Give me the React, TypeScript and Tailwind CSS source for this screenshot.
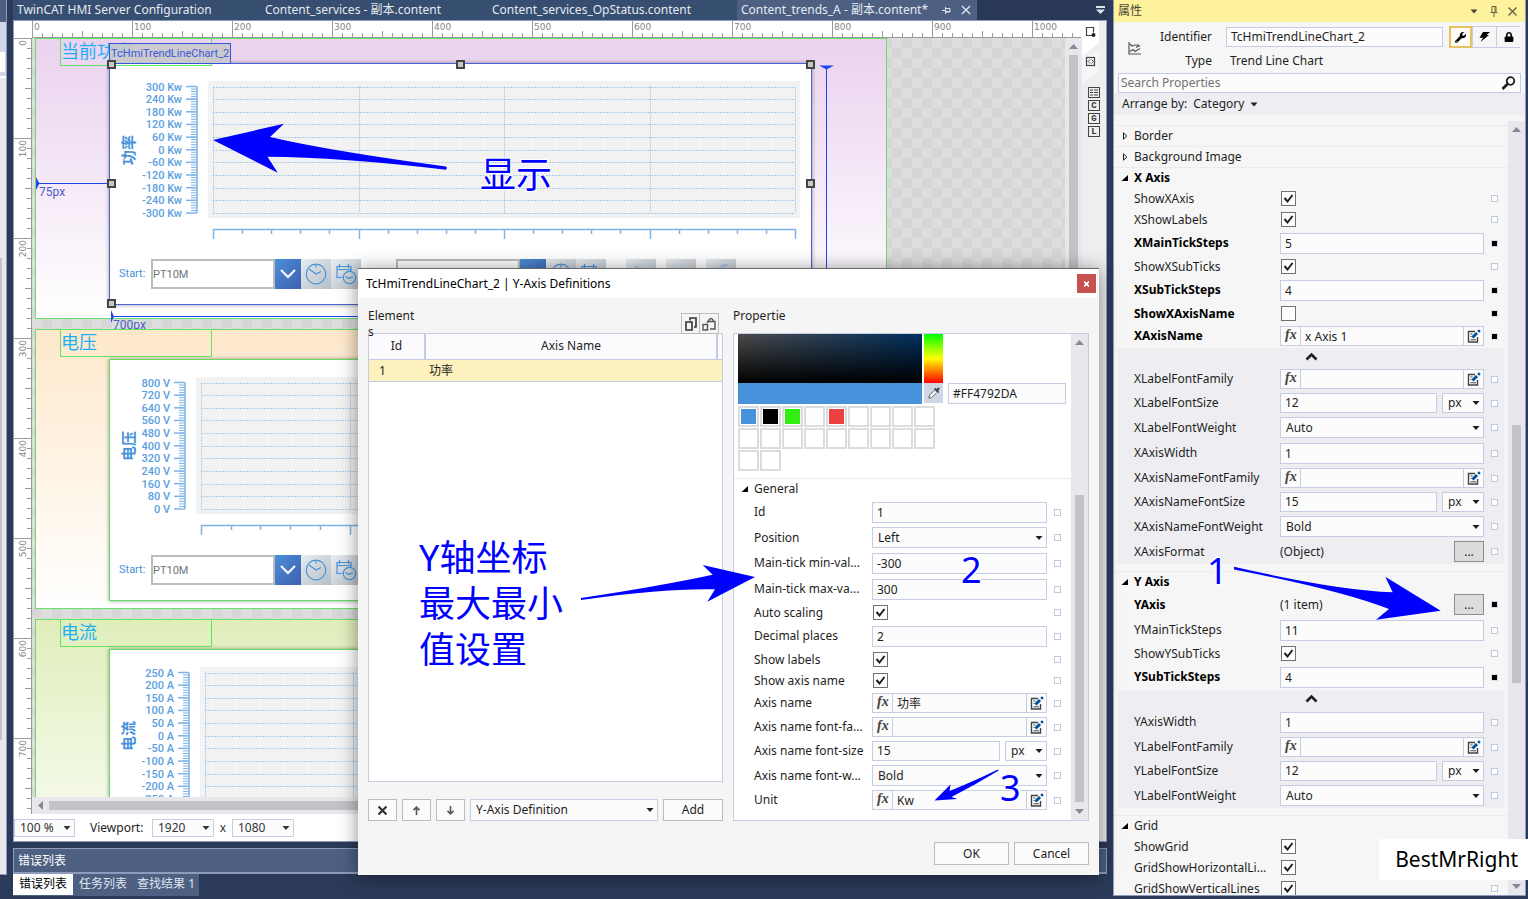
import { useId } from 'react'
import type { ReactNode } from 'react'
import { FaLock, FaWrench } from 'react-icons/fa'

type Kind = 'check' | 'text' | 'fx' | 'size' | 'select' | 'button'

interface Property {
  kind: Kind
  label: string
  value?: string
  bold?: boolean
  off?: boolean
}

const xAxisRows: Property[] = [
  { kind: 'check', label: 'ShowXAxis' },
  { kind: 'check', label: 'XShowLabels' },
  { kind: 'text', label: 'XMainTickSteps', value: '5', bold: true },
  { kind: 'check', label: 'ShowXSubTicks' },
  { kind: 'text', label: 'XSubTickSteps', value: '4', bold: true },
  { kind: 'check', label: 'ShowXAxisName', bold: true, off: true },
  { kind: 'fx', label: 'XAxisName', value: 'x Axis 1', bold: true },
]

const xAxisMore: Property[] = [
  { kind: 'fx', label: 'XLabelFontFamily' },
  { kind: 'size', label: 'XLabelFontSize', value: '12' },
  { kind: 'select', label: 'XLabelFontWeight', value: 'Auto' },
  { kind: 'text', label: 'XAxisWidth', value: '1' },
  { kind: 'fx', label: 'XAxisNameFontFamily' },
  { kind: 'size', label: 'XAxisNameFontSize', value: '15' },
  { kind: 'select', label: 'XAxisNameFontWeight', value: 'Bold' },
  { kind: 'button', label: 'XAxisFormat', value: '(Object)' },
]

const yAxisRows: Property[] = [
  { kind: 'button', label: 'YAxis', value: '(1 item)', bold: true },
  { kind: 'text', label: 'YMainTickSteps', value: '11' },
  { kind: 'check', label: 'ShowYSubTicks' },
  { kind: 'text', label: 'YSubTickSteps', value: '4', bold: true },
]

const yAxisMore: Property[] = [
  { kind: 'text', label: 'YAxisWidth', value: '1' },
  { kind: 'fx', label: 'YLabelFontFamily' },
  { kind: 'size', label: 'YLabelFontSize', value: '12' },
  { kind: 'select', label: 'YLabelFontWeight', value: 'Auto' },
]

const gridRows: Property[] = [
  { kind: 'check', label: 'ShowGrid' },
  { kind: 'check', label: 'GridShowHorizontalLi...' },
  { kind: 'check', label: 'GridShowVerticalLines' },
]

const generalRows: Property[] = [
  { kind: 'text', label: 'Id', value: '1' },
  { kind: 'select', label: 'Position', value: 'Left' },
  { kind: 'text', label: 'Main-tick min-val...', value: '-300' },
  { kind: 'text', label: 'Main-tick max-va...', value: '300' },
  { kind: 'check', label: 'Auto scaling' },
  { kind: 'text', label: 'Decimal places', value: '2' },
  { kind: 'check', label: 'Show labels' },
  { kind: 'check', label: 'Show axis name' },
  { kind: 'fx', label: 'Axis name', value: '功率' },
  { kind: 'fx', label: 'Axis name font-fa...' },
  { kind: 'size', label: 'Axis name font-size', value: '15' },
  { kind: 'select', label: 'Axis name font-w...', value: 'Bold' },
  { kind: 'fx', label: 'Unit', value: 'Kw' },
]

const rowHeight: Record<Kind, string> = {
  check: 'h-[21px]',
  text: 'h-[26px]',
  fx: 'h-6',
  size: 'h-6',
  select: 'h-[25px]',
  button: 'h-[25px]',
}

const swatches = ['#4792da', '#000000', '#33ee11', '#fffcfd', '#ee4040', ...Array(15).fill('#ffffff')]

function Caret({ className = '' }: { className?: string }) {
  return (
    <svg width="8" height="5" viewBox="0 0 8 5" className={`pointer-events-none ${className}`}>
      <path d="M0.5 0.5h7L4 4.5z" fill="currentColor" />
    </svg>
  )
}

function EditIcon() {
  return (
    <svg width="14" height="14" viewBox="0 0 14 14" className="shrink-0">
      <path d="M8 2.5H1.5v10.500h9V8" fill="#fff" stroke="#424242" strokeWidth="1.400" />
      <path d="M3.500 5h2M3.500 7.500h1M3.500 10.800h5.500" stroke="#424242" />
      <path d="M5.500 8.500L10 4" stroke="#00539c" strokeWidth="3" />
      <path d="M11.200 2.800L12.800 1.200" stroke="#00539c" strokeWidth="2.600" />
    </svg>
  )
}

function SelectBox({ id, label, value, className = '' }: { id?: string; label?: string; value: string; className?: string }) {
  return (
    <div className={`relative flex shrink-0 ${className}`}>
      <select
        id={id}
        aria-label={label}
        className="w-full h-full appearance-none border border-[#c5cde2] bg-[#fcfcfc] pl-[5px] pr-4 leading-4 outline-none"
      >
        <option>{value}</option>
      </select>
      <Caret className="absolute right-1 top-1/2 -translate-y-1/2" />
    </div>
  )
}

function Control({ row, id }: { row: Property; id: string }) {
  if (row.kind === 'check') {
    return (
      <div className="relative ml-px w-[15px] h-[15px]">
        <input
          id={id}
          type="checkbox"
          defaultChecked={!row.off}
          className="peer block w-[15px] h-[15px] appearance-none border border-[#717171] bg-[#fdfdfd]"
        />
        <svg
          width="15" height="15" viewBox="0 0 15 15"
          className="pointer-events-none absolute inset-0 hidden peer-checked:block"
        >
          <path d="M3.500 7l3 3.500L11.500 4" fill="none" stroke="#1e1e1e" strokeWidth="2" />
        </svg>
      </div>
    )
  }
  if (row.kind === 'fx') {
    return (
      <div className="flex flex-1 min-w-0 h-5 border border-[#c5cde2] bg-[#fcfcfc]">
        <span className="w-5 shrink-0 border-r border-[#c5cde2] pl-1 text-sm leading-4 italic font-bold font-['Liberation_Serif',serif] text-[#424242]">
          fx
        </span>
        <input id={id} defaultValue={row.value} className="w-0 min-w-0 flex-1 bg-transparent px-1 pt-0.5 outline-none" />
        <button aria-label={`Edit ${row.label}`} className="w-5 shrink-0 flex items-center justify-center border-l border-[#c5cde2]">
          <EditIcon />
        </button>
      </div>
    )
  }
  if (row.kind === 'size') {
    return (
      <div className="flex flex-1 min-w-0 gap-[5px] h-5">
        <input id={id} defaultValue={row.value} className="w-0 min-w-0 flex-1 border border-[#c5cde2] bg-[#fcfcfc] px-1 outline-none" />
        <SelectBox label={`${row.label} unit`} value="px" className="w-[42px]" />
      </div>
    )
  }
  if (row.kind === 'select') {
    return <SelectBox id={id} value={row.value ?? ''} className="flex-1 h-[21px]" />
  }
  if (row.kind === 'button') {
    return (
      <div className="flex flex-1 items-center justify-between">
        <span>{row.value}</span>
        <button id={id} className="w-[30px] h-[21px] border border-[#8c8c8c] bg-[#dcdcdc] leading-4">...</button>
      </div>
    )
  }
  return (
    <input id={id} defaultValue={row.value} className="w-0 min-w-0 flex-1 h-[21px] border border-[#c5cde2] bg-[#fcfcfc] px-1 outline-none" />
  )
}

function PropertyRow({ row, labelWidth }: { row: Property; labelWidth: string }) {
  const id = useId()
  return (
    <div className={`flex items-center ${rowHeight[row.kind]}`}>
      <label htmlFor={id} className={`shrink-0 pl-4 whitespace-nowrap ${labelWidth} ${row.bold ? 'font-bold text-black' : ''}`}>
        {row.label}
      </label>
      <div className="flex flex-1 min-w-0 items-center">
        <Control row={row} id={id} />
      </div>
      <div className="w-5 shrink-0 flex justify-center">
        <span className={`w-[7px] h-[7px] border ${row.bold ? 'bg-black border-[#d8dbe6]' : 'bg-white border-[#c0c8de]'}`} />
      </div>
    </div>
  )
}

function Rows({ rows, labelWidth }: { rows: Property[]; labelWidth: string }) {
  return (
    <div className="px-1">
      {rows.map((r) => <PropertyRow key={r.label} row={r} labelWidth={labelWidth} />)}
    </div>
  )
}

function MoreRows({ rows }: { rows: Property[] }) {
  return (
    <div className="mx-1 mb-[7px] bg-[#eeeef2]">
      <button aria-label="Show less" className="flex w-full h-[19px] items-center justify-center pb-0.5">
        <svg width="13" height="9" viewBox="0 0 13 9">
          <path d="M1.500 7.500L6.500 2.500l5 5" fill="none" stroke="#1e1e1e" strokeWidth="2.600" />
        </svg>
      </button>
      <div className="-mx-1">
        <Rows rows={rows} labelWidth="w-[162px]" />
      </div>
    </div>
  )
}

function GroupHeader({ title, open = false, bold = false }: { title: string; open?: boolean; bold?: boolean }) {
  return (
    <button className={`flex w-full h-[21px] items-center gap-[5px] border-t border-[#ececf0] pl-[7px] ${bold ? 'font-bold text-black' : ''}`}>
      <svg width="8" height="8" viewBox="0 0 8 8">
        {open
          ? <path d="M7 1v6H0.500z" fill="#000" />
          : <path d="M2.500 0.800L5.800 4 2.500 7.200z" fill="none" stroke="#1e1e1e" />}
      </svg>
      {title}
    </button>
  )
}

function VScroll({ thumb }: { thumb: string }) {
  return (
    <div className="relative flex flex-col justify-between items-center w-[17px] h-full shrink-0 bg-[#e8e8ec] py-1.5 text-[#868999]">
      <svg width="9" height="5" viewBox="0 0 9 5"><path d="M0 5h9L4.500 0z" fill="currentColor" /></svg>
      <div className={`absolute w-[9px] bg-[#c2c3c9] ${thumb}`} />
      <svg width="9" height="5" viewBox="0 0 9 5"><path d="M0 0h9L4.500 5z" fill="currentColor" /></svg>
    </div>
  )
}

// Rulers

function TopRuler() {
  const ticks = Array.from({ length: 105 }, (_, i) => i)
  return (
    <svg height="17" className="w-full shrink-0 bg-white">
      {ticks.map((i) => (
        <line
          key={i}
          x1={18.5 + i * 10} x2={18.5 + i * 10}
          y1={i % 10 === 0 ? 0 : i % 5 === 0 ? 10 : 12} y2="17"
          stroke="#9a9a9a"
        />
      ))}
      {ticks.filter((i) => i % 10 === 0).map((i) => (
        <text key={i} x={20 + i * 10} y="9" fontSize="9" fill="#858585" fontFamily="DejaVu Sans">{i * 10}</text>
      ))}
      <line x1="19" x2="1067" y1="16.500" y2="16.500" stroke="#9a9a9a" />
    </svg>
  )
}

function SideRuler() {
  const ticks = Array.from({ length: 78 }, (_, i) => i)
  return (
    <svg width="18" className="h-full shrink-0 bg-white">
      {ticks.map((i) => (
        <line
          key={i}
          y1={0.5 + i * 10} y2={0.5 + i * 10}
          x1={i % 10 === 0 ? 0 : i % 5 === 0 ? 11 : 13} x2="17"
          stroke="#9a9a9a"
        />
      ))}
      {ticks.filter((i) => i % 10 === 0).map((i) => (
        <text
          key={i} fontSize="9" fill="#858585" fontFamily="DejaVu Sans" textAnchor="end"
          transform={`translate(12 ${2 + i * 10}) rotate(-90)`}
        >
          {i * 10}
        </text>
      ))}
      <line x1="17.5" x2="17.5" y1="0" y2="100%" stroke="#9a9a9a" />
    </svg>
  )
}

// Trend charts

interface TrendProps {
  name: string
  unit: string
  max: number
  step: number
  labelRight: number
}

function TrendPlot({ name, unit, max, step, labelRight }: TrendProps) {
  const axis = labelRight + 15
  const left = labelRight + 31
  const right = 685
  const gap = 12.65
  const top = 22.5
  const rows = Array.from({ length: 11 }, (_, i) => i)
  return (
    <svg width="701" height="195" className="block">
      <rect x={labelRight + 26} y="17" width={690 - labelRight - 26} height="137" fill="#f2f2f2" />
      {rows.map((i) => (
        <g key={i}>
          <text
            x={labelRight} y={top + i * gap + 4} textAnchor="end"
            fontSize="11" fontWeight="500" fill="#5ba0e0" fontFamily="Roboto"
          >
            {max - i * step} {unit}
          </text>
          <line x1={axis - 11} x2={axis} y1={top + i * gap} y2={top + i * gap} stroke="#7db3e8" strokeWidth="1.500" />
          <line
            x1={left} x2={right} y1={Math.round(top + i * gap) + 0.5} y2={Math.round(top + i * gap) + 0.5}
            stroke="#a9cdee" strokeDasharray="2 1"
          />
        </g>
      ))}
      {Array.from({ length: 50 }, (_, i) => (
        <line
          key={i} x1={axis - 6} x2={axis}
          y1={top + (i * gap) / 5} y2={top + (i * gap) / 5}
          stroke="#7db3e8"
        />
      ))}
      <line x1={axis} x2={axis} y1={top} y2={top + gap * 10} stroke="#7db3e8" strokeWidth="1.500" />
      {[0, 1, 2, 3, 4].map((i) => {
        const x = Math.round(left + ((right - left) * i) / 4) + 0.5
        return <line key={i} x1={x} x2={x} y1={top} y2={top + gap * 10} stroke="#a9cdee" strokeDasharray="2 1" />
      })}
      <line x1={left} x2={right + 1} y1="165.500" y2="165.500" stroke="#7db3e8" strokeWidth="1.500" />
      {Array.from({ length: 21 }, (_, i) => {
        const x = Math.round(left + ((right - left) * i) / 20) + 0.5
        return <line key={i} x1={x} x2={x} y1="165" y2={i % 5 === 0 ? 175 : 170} stroke="#7db3e8" strokeWidth="1.500" />
      })}
      <text
        transform="translate(24 86) rotate(-90)" textAnchor="middle"
        fontSize="15" fontWeight="700" fill="#4792da" fontFamily="Roboto, 'Noto Sans CJK SC'"
      >
        {name}
      </text>
    </svg>
  )
}

function ClockIcon() {
  return (
    <svg width="22" height="22" viewBox="0 0 22 22" fill="none" stroke="#4792da" strokeWidth="1.200">
      <circle cx="11" cy="11" r="9.800" />
      <path d="M4 6l7 5 5-2.500M11 1.500v3" />
    </svg>
  )
}

function CalendarIcon() {
  return (
    <svg width="22" height="22" viewBox="0 0 22 22" fill="none" stroke="#4792da" strokeWidth="1.200">
      <path d="M7.500 14.500H2V3.500h14v5M2 6.500h14M4.500 1v4M13.500 1v4" />
      <circle cx="14.500" cy="14.500" r="6.200" />
      <path d="M10.500 13.500l3.500 2 4-2" />
    </svg>
  )
}

function ToolButton({ label, children }: { label: string; children?: ReactNode }) {
  return (
    <button
      aria-label={label}
      className="w-[30px] h-[30px] flex items-center justify-center bg-linear-to-br from-[#e9ecef] to-[#b4bfc7]"
    >
      {children}
    </button>
  )
}

function TimePicker({ value, label }: { value: string; label: string }) {
  return (
    <div className="flex">
      <input
        aria-label={label}
        defaultValue={value}
        className="w-[124px] h-[30px] border-2 border-[#bdbdbd] bg-white text-[11px] leading-5 font-['Roboto',sans-serif] text-[#6b7680] outline-none"
      />
      <button aria-label={`Open ${label}`} className="w-[26px] h-[30px] flex items-center justify-center bg-linear-to-br from-[#4a90d9] to-[#3f5fae]">
        <svg width="16" height="10" viewBox="0 0 16 10"><path d="M1 1l7 7 7-7" fill="none" stroke="#fff" strokeWidth="2" /></svg>
      </button>
      <ToolButton label={`${label} clock`}><ClockIcon /></ToolButton>
      <ToolButton label={`${label} calendar`}><CalendarIcon /></ToolButton>
    </div>
  )
}

function TrendCard(props: TrendProps & { selected?: boolean }) {
  const frame = props.selected ? 'border-[#4a63d8]' : 'border-[#5fdf5f]'
  return (
    <div className={`w-[703px] border bg-white shadow-[0_0_4px_rgba(0,0,0,0.4)] ${frame}`}>
      <TrendPlot {...props} />
      <div className="flex items-center h-[30px] pl-[9px]">
        <span className="w-8 text-[11px] font-['Roboto',sans-serif] text-[#4792da]">Start:</span>
        <TimePicker value="PT10M" label={`${props.name} start`} />
        <div className="w-[35px]" />
        <TimePicker value="" label={`${props.name} end`} />
        <div className="ml-5 flex gap-2.5">
          <ToolButton label="Play">
            <svg width="16" height="20" viewBox="0 0 16 20"><path d="M3 2l9 7-9 7z" fill="none" stroke="#8fbde8" /></svg>
          </ToolButton>
          <ToolButton label="Pause" />
          <ToolButton label="Edit">
            <svg width="16" height="20" viewBox="0 0 16 20"><path d="M15 1H9L2 9M12 1L8 12" fill="none" stroke="#8fbde8" /></svg>
          </ToolButton>
        </div>
      </div>
      <div className="h-[15px]" />
    </div>
  )
}

function Handle({ at }: { at: string }) {
  return <span className={`absolute w-[9px] h-[9px] border-2 border-[#444] bg-[#c8c8c8] ${at}`} />
}

function Selection() {
  return (
    <>
      <span className="absolute left-[73px] top-1 h-[21px] border border-[#3355dd] bg-[#c9c9cb]/90 px-px text-[11px] leading-5 font-['Roboto',sans-serif] text-[#3c57d8]">
        TcHmiTrendLineChart_2
      </span>
      <Handle at="left-[71px] top-[21px]" />
      <Handle at="left-[420px] top-[21px]" />
      <Handle at="left-[770px] top-[21px]" />
      <Handle at="left-[71px] top-[140px]" />
      <Handle at="left-[770px] top-[140px]" />
      <Handle at="left-[71px] top-[260px]" />
      <svg width="852" height="290" className="pointer-events-none absolute left-0 top-0" stroke="#2244ee" fill="#2244ee">
        <path d="M0 144.500h71M76 277.500h702M790.500 28v249" />
        <path d="M0 138l3.500 6.500L0 151zM75 271l3 6.500-3 6.500zM783 26.500h15l-7.500 4z" stroke="none" />
      </svg>
      <span className="absolute left-[3px] top-[145px] leading-4 font-['Roboto',sans-serif] text-[#4a60c8]">75px</span>
      <span className="absolute left-[77px] top-[278px] leading-4 font-['Roboto',sans-serif] text-[#4a60c8]">700px</span>
    </>
  )
}

function Region({ title, tone, children }: { title: string; tone: string; children: ReactNode }) {
  return (
    <section className={`relative w-[852px] border border-[#66e066] pl-[73px] bg-linear-to-b to-white ${tone}`}>
      <h2 className="absolute left-6 -top-px w-[152px] h-7 border border-[#5fe65f] text-lg leading-6 text-[#1bb0f5]">{title}</h2>
      {children}
    </section>
  )
}

function Canvas() {
  return (
    <div className="flex-1 min-w-0 overflow-hidden bg-[repeating-conic-gradient(#d6d6d6_0_25%,#dedede_0_50%)] bg-size-[20px_20px]">
      <div className="flex flex-col gap-2.5 pl-[3px]">
        <Region title="当前功率" tone="from-[#ead2ee] pt-6 pb-[13px]">
          <TrendCard name="功率" unit="Kw" max={300} step={60} labelRight={72} selected />
          <Selection />
        </Region>
        <Region title="电压" tone="from-[#fee8cb] pt-[29px] pb-[7px]">
          <TrendCard name="电压" unit="V" max={800} step={80} labelRight={60} />
        </Region>
        <Region title="电流" tone="from-[#e0eebb] pt-[29px] pb-[7px]">
          <TrendCard name="电流" unit="A" max={250} step={50} labelRight={64} />
        </Region>
      </div>
    </div>
  )
}

// Main document area

function DocumentTabs() {
  const tab = 'h-5 leading-5 px-1 whitespace-nowrap text-[#e4e9f2]'
  return (
    <div className="flex h-5 shrink-0 justify-between bg-[#293955]">
      <nav className="flex bg-[#364e6f]">
        <a href="#server" className={`${tab} w-[248px]`}>TwinCAT HMI Server Configuration</a>
        <a href="#services" className={`${tab} w-[227px]`}>Content_services - 副本.content</a>
        <a href="#status" className={`${tab} w-[249px]`}>Content_services_OpStatus.content</a>
        <div className="flex w-[240px] items-center bg-[#4d6082]">
          <a href="#trends" className={tab}>Content_trends_A - 副本.content*</a>
          <button aria-label="Pin" className="ml-auto">
            <svg width="9" height="9" viewBox="0 0 9 9" fill="none" stroke="#dfe4ee"><path d="M0 4.500h3M3.500 1v7M3.500 2.500h4.500v3.500H3.500M3.500 5.500h4.500" /></svg>
          </button>
          <button aria-label="Close tab" className="ml-2.5 mr-1.5">
            <svg width="10" height="10" viewBox="0 0 11 11" stroke="#dfe4ee" strokeWidth="1.500"><path d="M1 1l9 9M10 1l-9 9" /></svg>
          </button>
        </div>
      </nav>
      <button aria-label="Open documents" className="mr-0.5">
        <svg width="9" height="8" viewBox="0 0 9 8" fill="#dfe4ee"><path d="M0 0h9v2H0zM0 3.500h9L4.500 8z" /></svg>
      </button>
    </div>
  )
}

function SideTools() {
  const letter = 'w-3 h-[11px] border border-[#424242] text-[9px] leading-[10px] font-bold font-["Liberation_Mono",monospace] text-center text-[#333]'
  return (
    <div className="flex w-6 shrink-0 flex-col items-center bg-[#eeeef0]">
      <svg width="24" height="62" viewBox="0 0 24 62">
        <path d="M0 0h17v22L0 36z" fill="#fff" />
        <path d="M0 36l17-6v20L0 62z" fill="#f6f6f8" />
        <path d="M11.500 14.500h-7v-8h7v5" fill="none" stroke="#424242" strokeWidth="1.200" />
        <circle cx="11.500" cy="14" r="2" fill="#222" />
        <rect x="4.500" y="36.500" width="8" height="8" fill="none" stroke="#424242" strokeWidth="1.200" />
        <path d="M8 38.500L6 40.500l2 2M9.500 38.500l2 2-2 2" fill="none" stroke="#424242" strokeWidth="0.900" />
      </svg>
      <div className="mt-1 flex flex-col gap-0.5">
        <button aria-label="List" className="w-3 h-[11px] border border-[#424242] flex items-center justify-center">
          <svg width="8" height="7" viewBox="0 0 8 7" stroke="#424242"><path d="M0 1h3M4 1h4M0 3.500h3M4 3.500h4M0 6h3M4 6h4" /></svg>
        </button>
        <button className={letter}>C</button>
        <button className={letter}>G</button>
        <button className={letter}>L</button>
      </div>
    </div>
  )
}

function Editor() {
  return (
    <div className="flex flex-1 min-h-0 border border-[#8e9bbc] bg-white">
      <div className="flex flex-1 min-w-0 flex-col">
        <TopRuler />
        <div className="flex flex-1 min-h-0">
          <SideRuler />
          <div className="flex flex-1 min-w-0 flex-col">
            <div className="flex flex-1 min-h-0">
              <Canvas />
              <VScroll thumb="top-[17px] bottom-40" />
            </div>
            <div className="flex h-[17px] shrink-0 items-center gap-1.5 bg-[#e8e8ec] pl-1.5 pr-[17px]">
              <svg width="5" height="9" viewBox="0 0 5 9"><path d="M5 0v9L0 4.500z" fill="#868999" /></svg>
              <div className="h-[9px] flex-1 bg-[#c2c3c9]" />
            </div>
          </div>
        </div>
        <div className="flex h-[27px] shrink-0 items-center text-[#333]">
          <SelectBox label="Zoom" value="100 %" className="w-[61px] h-[18px]" />
          <span className="w-[77px] pl-[15px] text-[#1e1e1e]">Viewport:</span>
          <SelectBox label="Viewport width" value="1920" className="w-[62px] h-[18px]" />
          <span className="w-[18px] text-center">x</span>
          <SelectBox label="Viewport height" value="1080" className="w-[62px] h-[18px]" />
        </div>
      </div>
      <SideTools />
    </div>
  )
}

function ErrorList() {
  return (
    <footer className="shrink-0 mt-1.5 pb-[3px]">
      <div className="h-[26px] border border-b-2 border-[#8e9bbc] bg-[#4d6082] px-1 leading-[23px] text-white">错误列表</div>
      <div className="flex h-[22px] w-fit bg-[#4d6082] leading-5 text-[#dfe5f0]">
        <a href="#errors" className="h-[21px] bg-white px-1.5 text-black">错误列表</a>
        <a href="#tasks" className="px-1.5">任务列表</a>
        <a href="#results" className="px-1">查找结果 1</a>
      </div>
    </footer>
  )
}

function LeftSliver() {
  return (
    <aside className="flex h-[875px] w-[7px] shrink-0 flex-col border-r border-b border-[#8e9bbc] bg-[#e8e8ec]">
      <div className="h-[22px] bg-[#4d6082]" />
      <div className="h-[54px] bg-[#cfd6e5] pt-[30px]">
        <div className="h-5 w-[5px] bg-white" />
      </div>
      <div className="h-0.5 bg-white" />
      <div className="mt-[180px] h-[482px] w-0.5 bg-[#c2c3c9]" />
    </aside>
  )
}

// Properties window

function PropertiesWindow() {
  const tool = 'w-6 h-[22px] flex items-center justify-center border border-r-0 border-[#c5cde2] text-black'
  return (
    <aside className="flex w-[413px] shrink-0 flex-col border-x border-b border-[#8e9bbc] bg-[#f6f6f6] mr-0.5 mb-[3px]">
      <header className="flex h-[22px] shrink-0 items-center bg-[#fff29d] pl-1 text-[#4b4536]">
        <h2 className="flex-1">属性</h2>
        <button aria-label="Window options" className="px-2"><Caret /></button>
        <button aria-label="Auto hide" className="px-1">
          <svg width="8" height="11" viewBox="0 0 8 11" fill="none" stroke="#6b6140"><path d="M2 6.500V0.500h4v6M0.500 6.500h7M4 7v4M5 1v5.500" /></svg>
        </button>
        <button aria-label="Close" className="pl-1.5 pr-2">
          <svg width="9" height="9" viewBox="0 0 9 9" stroke="#6b6140" strokeWidth="1.400"><path d="M0.500 0.500l8 8M8.500 0.500l-8 8" /></svg>
        </button>
      </header>
      <div className="flex h-[51px] shrink-0 items-center pt-px pr-[5px]">
        <svg width="13" height="13" viewBox="0 0 13 13" className="mx-3.5 shrink-0" fill="none" stroke="#555" strokeWidth="1.200">
          <path d="M1 0v12h12M2 9.500l3-2 2 2 5-3M2 2l2 2 3-1h3l1.500 2M8 5.500L11.500 3" />
        </svg>
        <div className="grid flex-1 grid-cols-[57px_1fr] items-center gap-x-3.5">
          <label htmlFor="identifier" className="text-right">Identifier</label>
          <div className="flex h-[26px] items-center gap-1.5">
            <input
              id="identifier"
              defaultValue="TcHmiTrendLineChart_2"
              className="min-w-0 flex-1 h-5 border border-[#c5cde2] bg-[#fcfcfc] px-1 outline-none"
            />
            <div className="flex">
              <button aria-label="Properties" className="w-[23px] h-[22px] flex items-center justify-center border-2 border-[#e5c365] bg-[#fffcf4] text-black">
                <FaWrench size={11} />
              </button>
              <button aria-label="Events" className={tool}>
                <svg width="11" height="10" viewBox="0 0 11 10"><path d="M4 0h7L7.500 3H10L1.500 10 4 5.800H0.500z" fill="#000" /></svg>
              </button>
              <button aria-label="Lock" className={tool}><FaLock size={10} /></button>
            </div>
          </div>
          <span className="text-right">Type</span>
          <span className="h-[22px] leading-[22px] pl-1">Trend Line Chart</span>
        </div>
      </div>
      <div className="mx-1 flex h-5 shrink-0 items-center border border-[#c5cde2] bg-[#fcfcfc] pr-1">
        <input aria-label="Search Properties" placeholder="Search Properties" className="min-w-0 flex-1 bg-transparent px-0.5 leading-4 placeholder:text-[#717171] outline-none" />
        <svg width="15" height="15" viewBox="0 0 15 15" fill="none" stroke="#1e1e1e">
          <circle cx="9.500" cy="5" r="3.800" strokeWidth="1.800" />
          <path d="M6.500 8L1.500 13" strokeWidth="2.600" />
        </svg>
      </div>
      <div className="flex h-[22px] shrink-0 items-center gap-1.5 bg-[#eeeef2] pl-2">
        <span>Arrange by:</span>
        <button className="flex items-center gap-1.5">Category <Caret /></button>
      </div>
      <div className="flex flex-1 min-h-0">
        <div className="flex-1 min-w-0 overflow-hidden pt-2.5">
          <GroupHeader title="Border" />
          <GroupHeader title="Background Image" />
          <GroupHeader title="X Axis" open bold />
          <Rows rows={xAxisRows} labelWidth="w-[162px]" />
          <MoreRows rows={xAxisMore} />
          <GroupHeader title="Y Axis" open bold />
          <Rows rows={yAxisRows} labelWidth="w-[162px]" />
          <MoreRows rows={yAxisMore} />
          <GroupHeader title="Grid" open />
          <Rows rows={gridRows} labelWidth="w-[162px]" />
        </div>
        <div className="pt-1.5">
          <VScroll thumb="top-[304px] h-[258px]" />
        </div>
      </div>
    </aside>
  )
}

// Axis definitions dialog

function ColorPicker() {
  return (
    <div className="px-1 pb-[7px]">
      <div className="flex items-end gap-[5px]">
        <div className="grid grid-cols-[184px_19px] gap-x-0.5">
          <div className="h-[49px] bg-[linear-gradient(to_bottom,transparent,#000),linear-gradient(to_right,#4c4c4c,#00305f)]" />
          <div className="h-[49px] bg-[linear-gradient(to_bottom,#0f0,#ff0_50%,#f00)]" />
          <div className="h-[21px] bg-[#4792da]" />
          <button aria-label="Pick colour" className="flex h-5 items-center justify-center bg-[#cfd6e5]">
            <svg width="12" height="12" viewBox="0 0 12 12">
              <path d="M7 0.800l-1 1.500 3.800 3.800 1.500-1L10 3.800l1.800-2L10.500 0.300 8.500 2z" fill="#424242" />
              <path d="M6.200 3.500L1.500 8.200 0.800 11.200l3-0.700 4.700-4.700" fill="#f6f6f6" stroke="#666" />
            </svg>
          </button>
        </div>
        <input aria-label="Colour value" defaultValue="#FF4792DA" className="w-[118px] h-[21px] border border-[#c5cde2] bg-[#fcfcfc] px-1 outline-none" />
      </div>
      <div className="mt-0.5 flex w-[200px] flex-wrap gap-px">
        {swatches.map((c, i) => (
          <button key={i} aria-label={`Colour ${i + 1}`} className="w-[21px] h-[21px] border-2 border-[#dcdcdc] p-px bg-clip-content" style={{ backgroundColor: c }} />
        ))}
      </div>
    </div>
  )
}

function AxisDialog() {
  const push = 'flex items-center justify-center border border-[#bcbcbc] bg-[#fbfbfb]'
  return (
    <div role="dialog" aria-label="Y-Axis Definitions" className="absolute left-[358px] top-[268px] w-[741px] border-t border-[#6a6a6a] bg-[#f5f5f5] shadow-[0_2px_18px_rgba(0,0,0,0.45)]">
      <header className="mr-0.5 flex h-[29px] items-center justify-between bg-white pl-2 pr-px text-black">
        <h2>TcHmiTrendLineChart_2 | Y-Axis Definitions</h2>
        <button aria-label="Close dialog" className="w-[19px] h-[19px] flex items-center justify-center bg-[#c75050]">
          <svg width="5" height="6" viewBox="0 0 5 6" stroke="#fff" strokeWidth="1.600"><path d="M0 0.500l5 5M5 0.500l-5 5" /></svg>
        </button>
      </header>
      <div className="flex gap-2.5 px-2.5 pt-2.5">
        <div className="w-[355px]">
          <div className="relative z-10 h-[25px]">
            <h3 className="w-[50px] leading-4">Element<br />s</h3>
            <div className="absolute right-1 top-[5px] flex">
              <button aria-label="Copy" className="w-[19px] h-[21px] flex items-center justify-center border border-[#bcbcbc] bg-[#f5f5f5]">
                <svg width="12" height="14" viewBox="0 0 12 14" fill="none" stroke="#333" strokeWidth="1.600"><path d="M1 5h6v8H1zM5 3.500V1h6v9H9" /></svg>
              </button>
              <button aria-label="Paste" className="w-[19px] h-[21px] flex items-center justify-center border border-l-0 border-[#bcbcbc] bg-[#f5f5f5]">
                <svg width="14" height="14" viewBox="0 0 14 14" fill="none" stroke="#555" strokeWidth="1.400"><path d="M1 7.500h4.500V13H1zM5.500 6V4.500H13V12H8M7 4.500V3q2-3 4 0v1.500" /></svg>
              </button>
            </div>
          </div>
          <div className="h-[449px] border border-[#c5cde2] bg-white">
            <table className="w-full border-collapse">
              <thead>
                <tr className="h-[25px] bg-[#fbfbfd]">
                  <th className="w-14 border-r-2 border-b border-[#c5cde2] font-normal">Id</th>
                  <th className="border-r-2 border-b border-[#c5cde2] font-normal">Axis Name</th>
                  <th className="w-[5px] border-b border-[#c5cde2]" aria-label="Spare" />
                </tr>
              </thead>
              <tbody>
                <tr className="h-[22px] border-b border-[#c5cde2] bg-[#fdf2bd] leading-4">
                  <td className="pl-2.5 pt-0.5">1</td>
                  <td colSpan={2} className="pl-1 pt-0.5">功率</td>
                </tr>
              </tbody>
            </table>
          </div>
          <div className="mt-[17px] flex h-[22px] gap-[5px]">
            <button aria-label="Delete" className={`w-[29px] ${push}`}>
              <svg width="9" height="9" viewBox="0 0 9 9" stroke="#333" strokeWidth="2.200"><path d="M0.500 0.500l8 8M8.500 0.500l-8 8" /></svg>
            </button>
            <button aria-label="Move up" className={`w-[29px] ${push}`}>
              <svg width="7" height="9" viewBox="0 0 7 9" fill="none" stroke="#555" strokeWidth="1.600"><path d="M3.500 9V1.500M0.500 4.200l3-3 3 3" /></svg>
            </button>
            <button aria-label="Move down" className={`w-[29px] ${push}`}>
              <svg width="7" height="9" viewBox="0 0 7 9" fill="none" stroke="#555" strokeWidth="1.600"><path d="M3.500 0v7.500M0.500 4.800l3 3 3-3" /></svg>
            </button>
            <SelectBox label="Element type" value="Y-Axis Definition" className="flex-1" />
            <button className={`w-[60px] ${push}`}>Add</button>
          </div>
        </div>
        <div className="flex-1 min-w-0">
          <h3 className="h-[25px] leading-4">Propertie</h3>
          <div className="flex h-[488px] border border-[#c5cde2] bg-white">
            <div className="flex-1 min-w-0">
              <ColorPicker />
              <GroupHeader title="General" open />
              <Rows rows={generalRows} labelWidth="w-[134px]" />
            </div>
            <VScroll thumb="top-[161px] h-[307px]" />
          </div>
        </div>
      </div>
      <div className="mt-[21px] flex justify-end gap-[5px] pr-2.5 pb-[10px]">
        <button className={`w-[75px] h-[23px] ${push}`}>OK</button>
        <button className={`w-[75px] h-[23px] ${push}`}>Cancel</button>
      </div>
    </div>
  )
}

// Callouts drawn over the windows

function Note({ at, children }: { at: string; children: ReactNode }) {
  return (
    <p className={`absolute text-4xl leading-[46px] text-[#0000ff] [text-shadow:1px_1px_0_#fff,-1px_-1px_0_#fff,1px_-1px_0_#fff,-1px_1px_0_#fff] ${at}`}>
      {children}
    </p>
  )
}

function Callouts() {
  return (
    <div className="pointer-events-none absolute inset-0">
      <svg className="absolute w-full h-full" fill="#0000ff">
        <path d="M213 140L284 123.700 270 137Q330 151 446 166.500q1.500 1.500 0 3.200Q340 157 267.500 156.700L277.700 172.700z" />
        <path d="M755 577L702.700 565 712.700 574.700Q660 586 581 598v2Q665 588 715 589.300L707.300 601.700z" />
        <path d="M1234 566.700Q1335 590 1392.700 592.300L1385.300 576.700 1440.700 610.700 1376 619.700 1389 609Q1340 590 1234 569.500z" />
        <path d="M934.500 800.500L950.500 784.500 949.500 791Q972 782 998 769.500l0.700 1Q975 785 951.500 797L957.500 799z" />
      </svg>
      <Note at="left-[480px] top-[152px]">显示</Note>
      <Note at="left-[419px] top-[535px]">Y轴坐标<br />最大最小<br />值设置</Note>
      <Note at="left-[1207px] top-[548px]">1</Note>
      <Note at="left-[961px] top-[547px]">2</Note>
      <Note at="left-[1000px] top-[765px]">3</Note>
      <div className="absolute right-0 bottom-[19px] bg-white pl-4 pr-2.5 text-[21px] leading-[41px] text-black">BestMrRight</div>
    </div>
  )
}

export default function App() {
  return (
    <div className="relative flex h-screen min-h-[899px] overflow-hidden bg-[#2b3a58] text-xs leading-5 font-['Noto_Sans','Noto_Sans_CJK_SC',sans-serif] text-[#1e1e1e]">
      <LeftSliver />
      <main className="mx-1.5 flex flex-1 min-w-0 flex-col">
        <DocumentTabs />
        <Editor />
        <ErrorList />
      </main>
      <PropertiesWindow />
      <AxisDialog />
      <Callouts />
    </div>
  )
}
